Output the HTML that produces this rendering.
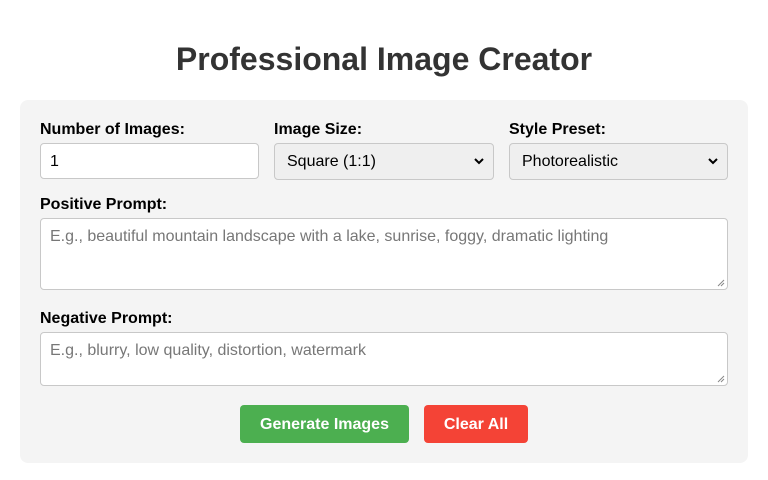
<!DOCTYPE html>
<html><head><style>
*{box-sizing:border-box;margin:0;padding:0}
body{width:768px;height:480px;background:#fff;font-family:"Liberation Sans",sans-serif;position:relative;overflow:hidden}
.a{position:absolute}
h1{position:absolute;left:0;width:768px;top:40px;text-align:center;font-size:32px;font-weight:bold;color:#333;line-height:38px}
.panel{left:20px;top:100px;width:728px;height:363px;background:#f4f4f4;border-radius:8px}
.lbl{font-size:16px;font-weight:bold;color:#000;line-height:18px}
.box{background:#fff;border:1px solid #c8c8c8;border-radius:4px;font-size:16px;color:#000;padding-left:9px}
.sel{background:#efefef;border:1px solid #c8c8c8;border-radius:4px;font-size:16px;color:#000;padding-left:12px;line-height:36px}
.chev{position:absolute;right:8px;top:11px;width:12px;height:12px}
.ph{color:#777;font-size:16px;padding-top:9px}
.btn{color:#fff;font-size:16px;font-weight:bold;border-radius:4px;text-align:center;line-height:40px}
.grip{position:absolute;right:2px;bottom:2px;width:8px;height:8px}
</style></head><body>
<h1>Professional Image Creator</h1>
<div class="a panel"></div>
<div class="a lbl" style="left:40px;top:121px">Number of Images:</div>
<div class="a lbl" style="left:274px;top:121px">Image Size:</div>
<div class="a lbl" style="left:509px;top:121px">Style Preset:</div>
<div class="a box" style="left:40px;top:143px;width:219px;height:36px;line-height:36px">1</div>
<div class="a sel" style="left:274px;top:143px;width:220px;height:37px">Square (1:1)<svg class="chev" viewBox="0 0 12 12"><path d="M2 4l4 4 4-4" fill="none" stroke="#000" stroke-width="2"/></svg></div>
<div class="a sel" style="left:509px;top:143px;width:219px;height:37px">Photorealistic<svg class="chev" viewBox="0 0 12 12"><path d="M2 4l4 4 4-4" fill="none" stroke="#000" stroke-width="2"/></svg></div>
<div class="a lbl" style="left:40px;top:196px">Positive Prompt:</div>
<div class="a box ph" style="left:40px;top:218px;width:688px;height:72px">E.g., beautiful mountain landscape with a lake, sunrise, foggy, dramatic lighting<svg class="grip" viewBox="0 0 8 8"><path d="M1 7L7 1M4 7L7 4" stroke="#888" stroke-width="1"/></svg></div>
<div class="a lbl" style="left:40px;top:310px">Negative Prompt:</div>
<div class="a box ph" style="left:40px;top:332px;width:688px;height:54px">E.g., blurry, low quality, distortion, watermark<svg class="grip" viewBox="0 0 8 8"><path d="M1 7L7 1M4 7L7 4" stroke="#888" stroke-width="1"/></svg></div>
<div class="a btn" style="left:240px;top:405px;width:169px;height:38px;background:#4caf50">Generate Images</div>
<div class="a btn" style="left:424px;top:405px;width:104px;height:38px;background:#f44336">Clear All</div>
</body></html>
